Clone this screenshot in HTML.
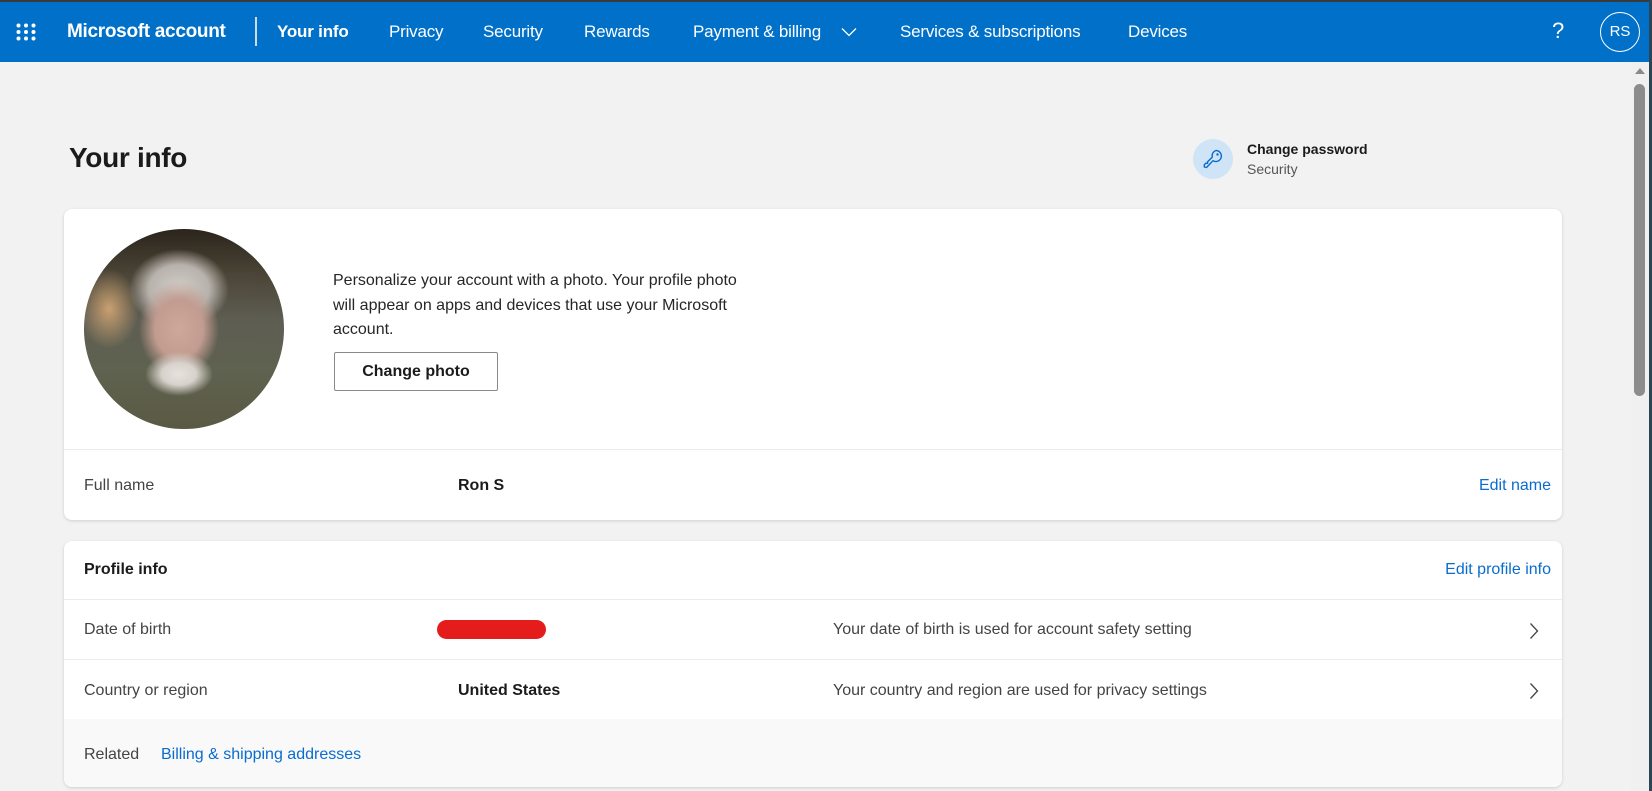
<!DOCTYPE html>
<html><head><meta charset="utf-8"><style>
*{margin:0;padding:0;box-sizing:border-box}
body{width:1652px;height:791px;overflow:hidden;background:#2b4557;font-family:"Liberation Sans",sans-serif;position:relative;color:#1b1b1b}
.abs{position:absolute;white-space:nowrap}
#vp{position:absolute;left:0;top:0;width:1649px;height:791px;background:#f2f2f2;overflow:hidden}
#nav{position:absolute;left:0;top:0;width:1649px;height:62px;background:#0070c9;border-top:2px solid #3a3a3a;color:#fff}
#nav .t{position:absolute;top:20px;font-size:17px;letter-spacing:-0.2px}
.card{position:absolute;left:64px;width:1498px;background:#fff;border-radius:8px;box-shadow:0 1px 3px rgba(0,0,0,.15);overflow:hidden}
.lbl{font-size:16px;color:#444}
.b{font-weight:bold;color:#1b1b1b}
.link{color:#0a6ccf;font-size:16px}
.hr{position:absolute;left:0;right:0;height:1px;background:#ebebeb}
</style></head><body>
<div id="vp">
<div id="nav">
 <svg class="abs" style="left:16px;top:21px" width="20" height="18" viewBox="0 0 20 18" fill="#fff">
  <circle cx="2.5" cy="2.5" r="2"/><circle cx="10" cy="2.5" r="2"/><circle cx="17.5" cy="2.5" r="2"/>
  <circle cx="2.5" cy="9" r="2"/><circle cx="10" cy="9" r="2"/><circle cx="17.5" cy="9" r="2"/>
  <circle cx="2.5" cy="15.5" r="2"/><circle cx="10" cy="15.5" r="2"/><circle cx="17.5" cy="15.5" r="2"/></svg>
 <div class="t" style="left:67px;font-size:19px;font-weight:bold;top:19px;letter-spacing:-0.3px">Microsoft account</div>
 <div class="abs" style="left:255px;top:15px;width:2px;height:29px;background:#c9ddf0"></div>
 <div class="t" style="left:277px;font-weight:bold">Your info</div>
 <div class="t" style="left:389px">Privacy</div>
 <div class="t" style="left:483px">Security</div>
 <div class="t" style="left:584px">Rewards</div>
 <div class="t" style="left:693px">Payment &amp; billing</div>
 <svg class="abs" style="left:841px;top:25px" width="16" height="10" viewBox="0 0 16 10"><path d="M1 1.5l7 7 7-7" fill="none" stroke="#fff" stroke-width="1.3"/></svg>
 <div class="t" style="left:900px">Services &amp; subscriptions</div>
 <div class="t" style="left:1128px">Devices</div>
 <div class="t" style="left:1552px;font-size:22px;top:16px">?</div>
 <div class="abs" style="left:1600px;top:10px;width:40px;height:40px;border:1.5px solid #fff;border-radius:50%;font-size:15px;text-align:center;line-height:37px">RS</div>
</div>
<div class="abs" style="left:1630px;top:62px;width:19px;height:729px;background:#f0f0f0"></div>
<svg class="abs" style="left:1634px;top:67px" width="12" height="8"><path d="M1 7L6 1l5 6z" fill="#8a8a8a"/></svg>
<div class="abs" style="left:1634px;top:84px;width:11px;height:312px;background:#8c8c8c;border-radius:6px"></div>

<div class="abs" style="left:69px;top:142px;font-size:28px;font-weight:bold;color:#1b1b1b;letter-spacing:-0.3px">Your info</div>
<div class="abs" style="left:1193px;top:139px;width:40px;height:40px;border-radius:50%;background:#cfe4f7"></div>
<svg class="abs" style="left:1201px;top:147px" width="24" height="24" viewBox="0 0 24 24" fill="none" stroke="#0a6ccf" stroke-width="1.4" stroke-linejoin="round"><path d="M15 3.5a5.5 5.5 0 1 1-3 10.2L5.5 20.5l-2.2-0.5 0-2.2 1.7-1.7 1.6 0.3 0-1.6 4.7-4.7A5.5 5.5 0 0 1 15 3.5z"/><circle cx="16.5" cy="7.5" r="1.2" fill="#0a6ccf" stroke="none"/></svg>
<div class="abs" style="left:1247px;top:141px;font-size:14px;font-weight:bold">Change password</div>
<div class="abs" style="left:1247px;top:161px;font-size:14px;color:#555">Security</div>

<div class="card" style="top:209px;height:311px">
 <div class="abs" style="left:20px;top:20px;width:200px;height:200px;border-radius:50%;overflow:hidden;background:
  radial-gradient(ellipse 34px 22px at 95px 145px,#e6e2de 0%,#d8d2cc 50%,rgba(220,220,220,0) 100%),
  radial-gradient(ellipse 40px 48px at 95px 100px,#cfa89b 0%,#c29c90 60%,rgba(150,130,120,0) 100%),
  radial-gradient(ellipse 50px 40px at 95px 60px,#d2cdc8 0%,#b8b2ac 60%,rgba(180,180,180,0) 100%),
  radial-gradient(ellipse 30px 40px at 25px 80px,#c9a070 0%,rgba(0,0,0,0) 100%),
  linear-gradient(180deg,#2a241c 0%,#4a4436 22%,#5e5d52 45%,#5f6250 70%,#5a5a44 100%)"></div>
 <div class="abs" style="left:269px;top:60px;font-size:16px;line-height:24.5px;white-space:normal;width:420px;color:#262626">Personalize your account with a photo. Your profile photo will appear on apps and devices that use your Microsoft account.</div>
 <div class="abs" style="left:270px;top:143px;width:164px;height:39px;border:1px solid #8a8a8a;border-radius:2px;font-size:16px;font-weight:bold;text-align:center;line-height:37px">Change photo</div>
 <div class="hr" style="top:240px"></div>
 <div class="abs lbl" style="left:20px;top:268px">Full name</div>
 <div class="abs b" style="left:394px;top:268px;font-size:16px">Ron S</div>
 <div class="abs link" style="right:11px;top:268px">Edit name</div>
</div>

<div class="card" style="top:541px;height:246px">
 <div class="abs b" style="left:20px;top:20px;font-size:16px">Profile info</div>
 <div class="abs link" style="right:11px;top:20px">Edit profile info</div>
 <div class="hr" style="top:58px"></div>
 <div class="abs lbl" style="left:20px;top:80px">Date of birth</div>
 <div class="abs" style="left:373px;top:79px;width:109px;height:19px;background:#e41c1c;border-radius:10px"></div>
 <div class="abs lbl" style="left:769px;top:80px">Your date of birth is used for account safety setting</div>
 <svg class="abs" style="left:1465px;top:81px" width="10" height="18"><path d="M1.5 1.5l7 7.5-7 7.5" fill="none" stroke="#444" stroke-width="1.3"/></svg>
 <div class="hr" style="top:118px"></div>
 <div class="abs lbl" style="left:20px;top:141px">Country or region</div>
 <div class="abs b" style="left:394px;top:141px;font-size:16px">United States</div>
 <div class="abs lbl" style="left:769px;top:141px">Your country and region are used for privacy settings</div>
 <svg class="abs" style="left:1465px;top:141px" width="10" height="18"><path d="M1.5 1.5l7 7.5-7 7.5" fill="none" stroke="#444" stroke-width="1.3"/></svg>
 <div class="abs" style="left:0;top:178px;width:100%;height:68px;background:#f9f9f9"></div>
 <div class="abs lbl" style="left:20px;top:205px">Related</div>
 <div class="abs link" style="left:97px;top:205px">Billing &amp; shipping addresses</div>
</div>
</div>
</body></html>
